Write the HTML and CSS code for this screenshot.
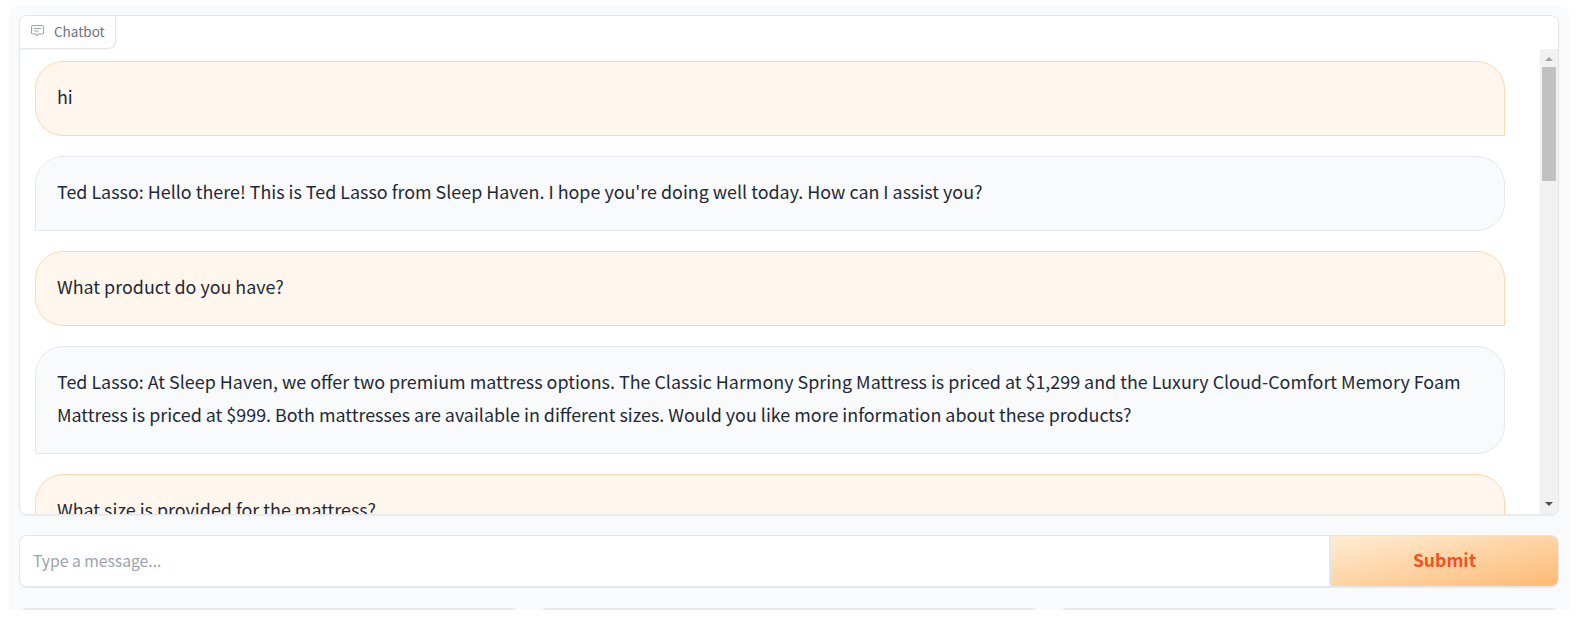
FILE: index.html
```html
<!DOCTYPE html>
<html lang="en">
<head>
  <meta charset="UTF-8">
  <meta name="viewport" content="width=device-width, initial-scale=1.0">
  <title>Chatbot</title>
  <link rel="stylesheet" href="styles.css">
</head>
<body>
  <div class="app">
    <div class="chat-panel">
      <div class="tab">
        <svg class="tab-icon" viewBox="0 0 13 12" fill="none" stroke="currentColor" stroke-width="1">
          <path d="M1.500 .5h10a1 1 0 0 1 1 1v6.500a1 1 0 0 1-1 1H7l-1.500 2.200-.5-2.200H1.500a1 1 0 0 1-1-1V1.500a1 1 0 0 1 1-1z"/>
          <path d="M3 3.500h7M3 6h5"/>
        </svg>
        <span>Chatbot</span>
      </div>
      <div class="chat-body">
        <div class="log">
          <div class="msg user">hi</div>
          <div class="msg bot">Ted Lasso: Hello there! This is Ted Lasso from Sleep Haven. I hope you're doing well today. How can I assist you?</div>
          <div class="msg user">What product do you have?</div>
          <div class="msg bot">Ted Lasso: At Sleep Haven, we offer two premium mattress options. The Classic Harmony Spring Mattress is priced at $1,299 and the Luxury Cloud-Comfort Memory Foam Mattress is priced at $999. Both mattresses are available in different sizes. Would you like more information about these products?</div>
          <div class="msg user">What size is provided for the mattress?</div>
        </div>
        <div class="scrollbar">
          <div class="arrow up"></div>
          <div class="track"><div class="thumb"></div></div>
          <div class="arrow down"></div>
        </div>
      </div>
    </div>

    <div class="input-row">
      <input class="message" type="text" placeholder="Type a message...">
      <button class="submit">Submit</button>
    </div>

    <div class="button-row">
      <div class="stub"></div>
      <div class="stub"></div>
      <div class="stub"></div>
    </div>
  </div>
</body>
</html>
```

FILE: styles.css
```css
* { box-sizing: border-box; }
html, body { height: 100%; }
body { margin: 0; background: white; font-family: "Noto Sans CJK SC", "Noto Sans", sans-serif; color: #1f2937; overflow: hidden; }

.app { margin: 5px 10px 0 9px; height: 605px; padding: 10px; background: #f9fafb; border-radius: 12px 12px 0 0; overflow: hidden; display: flex; flex-direction: column; gap: 20px; }

.chat-panel { height: 500px; flex: none; background: white; border: 1px solid #e5e7eb; border-radius: 8px; display: flex; flex-direction: column; box-shadow: 0 1px 2px rgba(0,0,0,0.05); overflow: hidden; }

.tab { width: 96px; height: 33px; flex: none; display: flex; align-items: center; gap: 10px; padding: 0 0 2px 11px; font-size: 13.5px; color: #6b7280; background: white; border-right: 1px solid #e5e7eb; border-bottom: 1px solid #e5e7eb; border-radius: 0 0 8px 0; box-shadow: 0 1px 2px rgba(0,0,0,0.05); }
.tab-icon { width: 13px; height: 12px; flex: none; color: #9ca3af; }

.chat-body { flex: 1; min-height: 0; display: flex; }
.log { flex: 1; min-width: 0; overflow: hidden; padding: 12px 35px 0 15px; display: flex; flex-direction: column; gap: 20px; }

.msg { flex: none; padding: 18px 21px 22px; font-size: 17.9px; line-height: 33px; border: 1px solid; }
.msg.user { background: #fff7ed; border-color: #fed7aa; border-radius: 28px 28px 0 28px; }
.msg.bot { background: #f9fafb; border-color: #e5e7eb; border-radius: 28px 28px 28px 0; }

.scrollbar { width: 18px; flex: none; background: #f1f1f1; display: flex; flex-direction: column; }
.arrow { height: 18px; flex: none; display: flex; align-items: center; justify-content: center; }
.arrow.up { padding-top: 2px; }
.arrow.down { padding-bottom: 2px; }
.arrow::before { content: ""; border-left: 4px solid transparent; border-right: 4px solid transparent; }
.arrow.up::before { border-bottom: 4px solid #a3a3a3; }
.arrow.down::before { border-top: 4px solid #505050; }
.track { flex: 1; padding: 0 2px; }
.thumb { height: 114px; background: #c1c1c1; }

.input-row { height: 53px; flex: none; display: flex; background: white; border: 1px solid #e5e7eb; border-bottom-width: 2px; border-radius: 8px; overflow: hidden; }
.message { flex: 1; min-width: 0; padding: 0 13px 2px; border: none; outline: none; font-family: inherit; font-size: 15.7px; color: #1f2937; }
.message::placeholder { color: #9ca3af; }
.submit { width: 229px; flex: none; padding: 0 0 3px; border: none; border-left: 2px solid #e5e7eb; font-family: inherit; font-size: 17.6px; font-weight: 600; color: #f4511e; background: linear-gradient(to bottom right, #ffedd5, #fdba74); cursor: pointer; }

.button-row { flex: none; display: flex; gap: 20px; }
.stub { flex: 1; height: 40px; background: #f9fafb; border: 1px solid #e5e7eb; border-top-width: 2px; border-radius: 8px; }
```
